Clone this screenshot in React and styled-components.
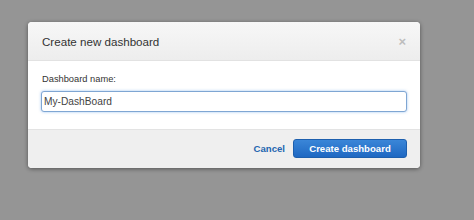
import styled, { createGlobalStyle } from 'styled-components'

const Global = createGlobalStyle`
    html, body {
        margin: 0;
        padding: 0;
        background: #959595;
        font-family: "Helvetica Neue", "Liberation Sans", Arial, sans-serif;
    }
`

export default function App() {
    return (
        <Page>
            <Global />
            <Dialog>
                <Header>
                    <Title>Create new dashboard</Title>
                    <Close>×</Close>
                </Header>
                <Body>
                    <Label>Dashboard name:</Label>
                    <Input defaultValue="My-DashBoard" />
                </Body>
                <Footer>
                    <Cancel>Cancel</Cancel>
                    <Primary>Create dashboard</Primary>
                </Footer>
            </Dialog>
        </Page>
    )
}

const Page = styled.div`
    width: 474px;
    height: 220px;
    padding: 22px 0 0 28px;
    box-sizing: border-box;
`

const Dialog = styled.div`
    width: 392px;
    height: 146px;
    background: #fff;
    border-radius: 4px;
    box-shadow: 0 1px 4px rgba(0, 0, 0, 0.45);
    overflow: hidden;
    display: flex;
    flex-direction: column;
`

const Header = styled.div`
    height: 39px;
    display: flex;
    align-items: center;
    justify-content: space-between;
    padding: 0 14px 0 14px;
    background: linear-gradient(#f7f7f7, #ededed);
    border-bottom: 1px solid #e2e2e2;
    box-sizing: border-box;
`

const Title = styled.div`
    font-size: 11.6px;
    color: #333;
    padding-top: 1px;
`

const Close = styled.div`
    font-size: 13px;
    color: #bdbdbd;
    font-weight: bold;
`

const Body = styled.div`
    height: 68px;
    padding: 13px 13px 0 13px;
    box-sizing: border-box;
`

const Label = styled.div`
    font-size: 9.3px;
    color: #333;
    margin: 0 0 7px 1px;
`

const Input = styled.input`
    display: block;
    width: 100%;
    height: 21px;
    box-sizing: border-box;
    border: 1px solid #7fa6d3;
    border-radius: 3px;
    box-shadow: 0 0 3px rgba(82, 150, 230, 0.55);
    padding: 0 2px 0 2px;
    font-family: inherit;
    font-size: 10.2px;
    color: #444;
    outline: none;
`

const Footer = styled.div`
    flex: 1;
    background: #efefef;
    border-top: 1px solid #e3e3e3;
    display: flex;
    align-items: center;
    justify-content: flex-end;
    gap: 8px;
    padding: 0 13px 1px 0;
`

const Cancel = styled.button`
    background: none;
    border: none;
    padding: 0;
    font-family: inherit;
    font-size: 9.6px;
    font-weight: bold;
    color: #2466b0;
`

const Primary = styled.button`
    width: 114px;
    height: 19px;
    border: 1px solid #1d5fae;
    border-radius: 3px;
    background: linear-gradient(#3a86d8, #1f68c2);
    color: #fff;
    font-family: inherit;
    font-size: 9.6px;
    font-weight: bold;
    padding: 0;
`
